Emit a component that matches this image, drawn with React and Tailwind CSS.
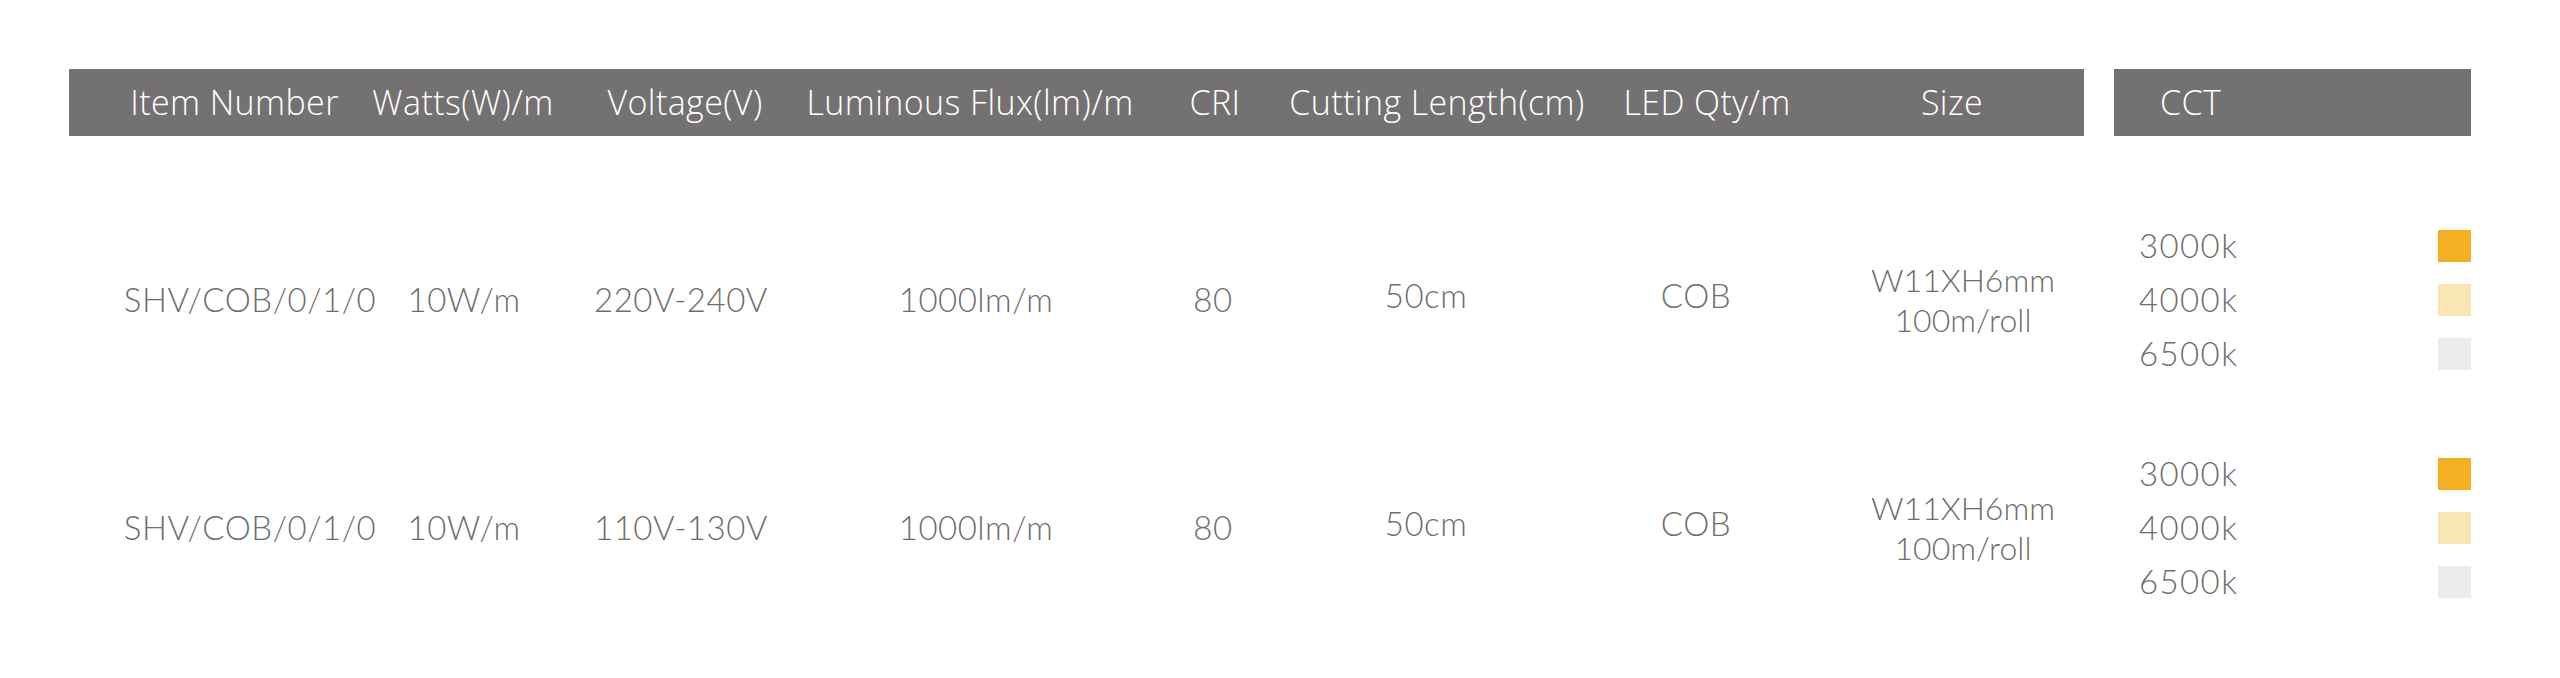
import React from "react";

const headCols = [
  { w: "w-[331px]", t: "Item Number" },
  { w: "w-[126px]", t: "Watts(W)/m" },
  { w: "w-[318px]", t: "Voltage(V)" },
  { w: "w-[252px]", t: "Luminous Flux(lm)/m" },
  { w: "w-[238px]", t: "CRI" },
  { w: "w-[206px]", t: "Cutting Length(cm)" },
  { w: "w-[334px]", t: "LED Qty/m" },
  { w: "w-[156px]", t: "Size" },
];

const bodyW = [
  "w-[362px]",
  "w-[66px]",
  "w-[368px]",
  "w-[222px]",
  "w-[252px]",
  "w-[174px]",
  "w-[366px]",
  "w-[168px]",
];

const rows = [
  ["SHV/COB/0/1/0", "10W/m", "220V-240V", "1000lm/m", "80", "50cm", "COB", "size"],
  ["SHV/COB/0/1/0", "10W/m", "110V-130V", "1000lm/m", "80", "50cm", "COB", "size"],
];

const ccts = [
  { t: "3000k", c: "bg-[#f3b023]" },
  { t: "4000k", c: "bg-[#fae5b5]" },
  { t: "6500k", c: "bg-[#ececec]" },
];

function Cell({ w, children, raised }) {
  return (
    <div className={`${w} flex justify-center whitespace-nowrap ${raised ? "-translate-y-[4px]" : ""}`}>
      {children}
    </div>
  );
}

const headFont = { fontFamily: "'Open Sans', Lato, sans-serif" };

export default function App() {
  return (
    <div
      className="w-[2560px] h-[678px] bg-white pl-[69px] pt-[69px] text-[#6e6e6e] font-light"
      style={{ fontFamily: "Lato, 'Open Sans', sans-serif" }}
    >
      <div className="flex gap-[30px]" style={headFont}>
        <div className="w-[2015px] h-[67px] bg-[#747172] flex items-center text-white text-[34px] tracking-[0.4px]">
          {headCols.map((c) => (
            <Cell key={c.t} w={c.w}>
              {c.t}
            </Cell>
          ))}
        </div>
        <div className="w-[357px] h-[67px] bg-[#747172] flex items-center pl-[46px] text-white text-[34px] tracking-[0.4px]">
          CCT
        </div>
      </div>

      <div className="mt-[50px] flex flex-col">
        {rows.map((r, i) => (
          <div key={i} className="h-[228px] flex gap-[30px] items-center text-[33px] tracking-[0.5px]">
            <div className="w-[2015px] flex items-center">
              {r.map((v, j) =>
                v === "size" ? (
                  <div key={j} className={`${bodyW[j]} flex flex-col items-center text-[32px] leading-[40px] whitespace-nowrap tracking-normal`}>
                    <span>W11XH6mm</span>
                    <span>100m/roll</span>
                  </div>
                ) : (
                  <Cell key={j} w={bodyW[j]} raised={j === 5 || j === 6}>
                    {v}
                  </Cell>
                )
              )}
            </div>
            <div className="w-[357px] pl-[25px] flex flex-col gap-[22px] tracking-[1.4px]">
              {ccts.map((c) => (
                <div key={c.t} className="flex items-center justify-between h-[32px]">
                  <span>{c.t}</span>
                  <span className={`w-[33px] h-[32px] ${c.c}`} />
                </div>
              ))}
            </div>
          </div>
        ))}
      </div>
    </div>
  );
}
